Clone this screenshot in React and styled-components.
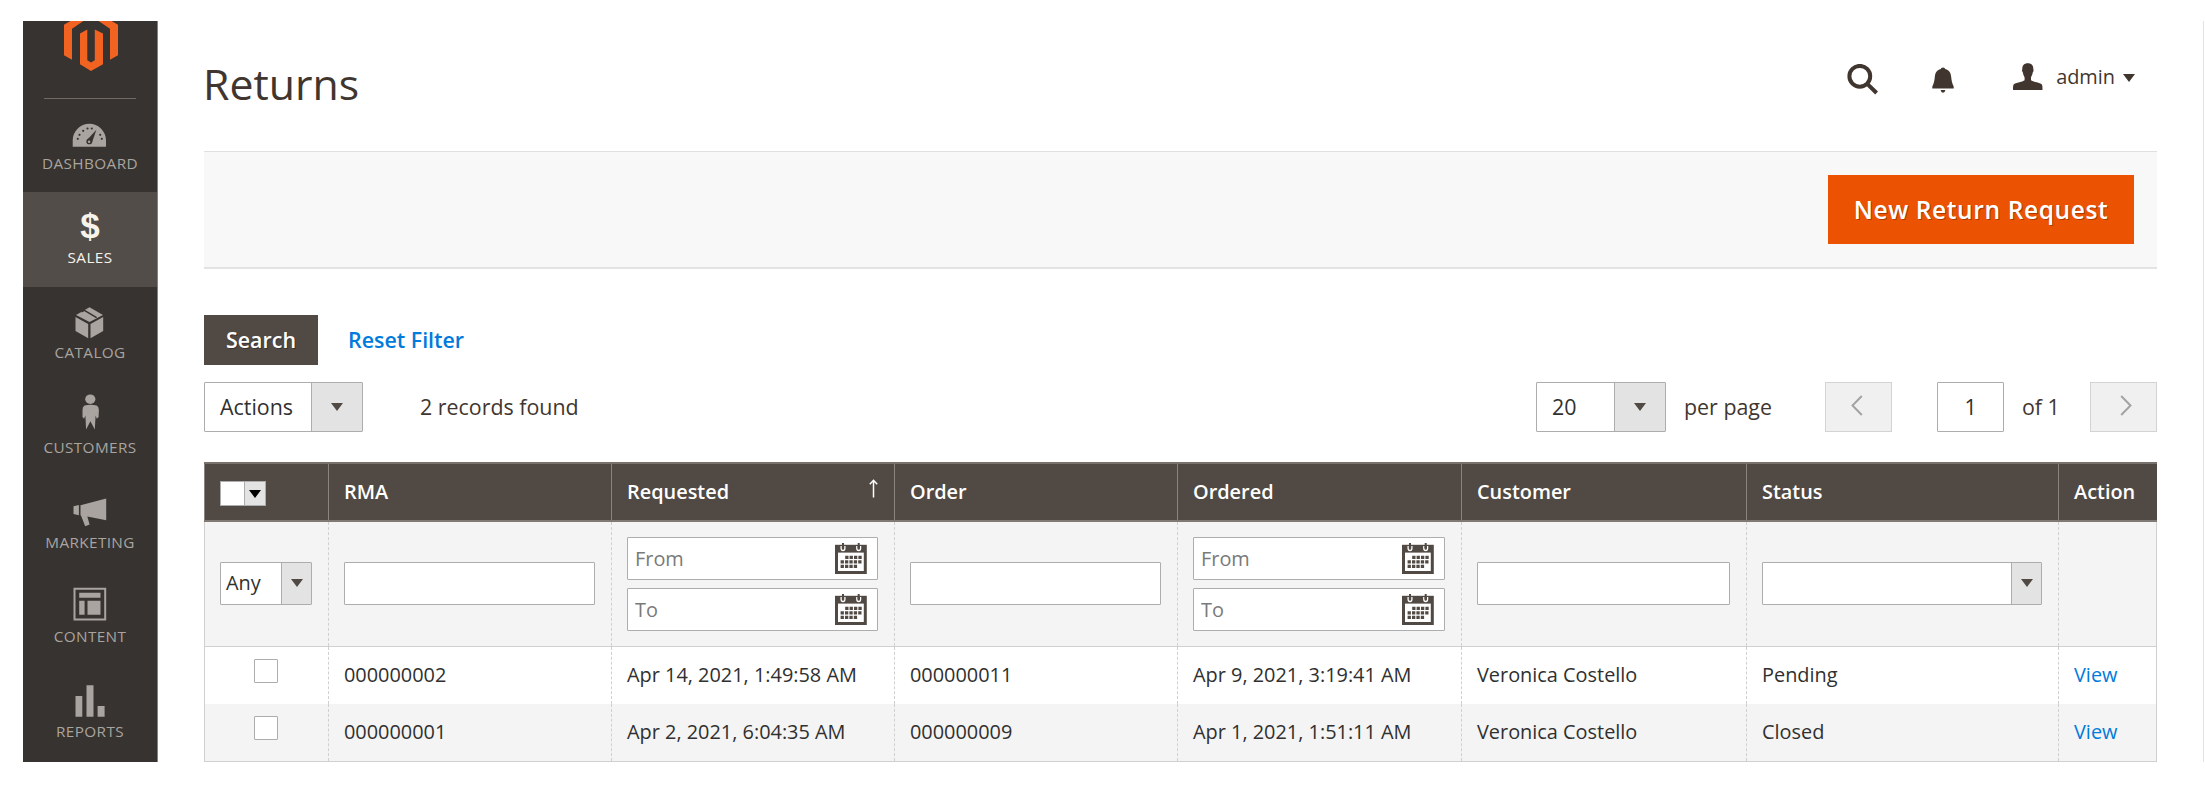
import styled, { createGlobalStyle, css } from "styled-components";

const menuItems = [
  { label: "Dashboard", icon: "dashboard" },
  { label: "Sales", icon: "sales", active: true },
  { label: "Catalog", icon: "catalog" },
  { label: "Customers", icon: "customers" },
  { label: "Marketing", icon: "marketing" },
  { label: "Content", icon: "content" },
  { label: "Reports", icon: "reports" },
];

const rows = [
  {
    rma: "000000002",
    requested: "Apr 14, 2021, 1:49:58 AM",
    order: "000000011",
    ordered: "Apr 9, 2021, 3:19:41 AM",
    customer: "Veronica Costello",
    status: "Pending",
  },
  {
    rma: "000000001",
    requested: "Apr 2, 2021, 6:04:35 AM",
    order: "000000009",
    ordered: "Apr 1, 2021, 1:51:11 AM",
    customer: "Veronica Costello",
    status: "Closed",
  },
];

const menuIcons = {
  dashboard: (
    <>
      <path d="M.7 36.8V30.3a16.65 16.5 0 0 1 33.3 0v6.5z" />
      <g fill="#373330">
        <circle cx="5.8" cy="28.8" r="1.1" />
        <circle cx="7.5" cy="24.8" r="1.1" />
        <circle cx="11.2" cy="20.8" r="1.1" />
        <circle cx="15.5" cy="18.5" r="1.1" />
        <circle cx="19.8" cy="18.5" r="1.1" />
        <circle cx="28.2" cy="24.8" r="1.1" />
        <circle cx="29.8" cy="28.8" r="1.1" />
        <path d="M24.4 19.8 20 32.6l-5-2.7z" />
        <circle cx="17.3" cy="31.4" r="2.9" />
      </g>
      <circle cx="17.1" cy="31.7" r="1.2" />
    </>
  ),
  catalog: (
    <>
      <path d="M17.5 7.2 31 14.9 17.5 22 4 14.9z" />
      <path d="M3.5 16.9 16.2 23.9V38.2L3.5 30.9z" />
      <path d="M18.5 23.9 31.2 16.9V30.9L18.5 38.2z" />
      <path
        d="M11.2 9.600 24.600 17.600M9.400 11.800 12.400 10.200"
        stroke="#373330"
        strokeWidth="1.6"
      />
    </>
  ),
  customers: (
    <>
      <ellipse cx="18.3" cy="5.2" rx="5.1" ry="4.8" />
      <path d="M12.5 11.4Q18.6 10 24.7 11.4 26.9 12.4 26.9 16L26.6 23 24.8 24.8 23.6 21.5 22.8 35.6 18.4 27.2 14.1 35.6 13.4 21.5 12.1 24.8 10.5 23V16Q10.4 12.4 12.5 11.4z" />
    </>
  ),
  marketing: (
    <>
      <path d="M1.5 17.3 6.9 16V26.2L1.5 25z" />
      <path d="M8.5 16.3 34.2 9.6V31.3L15.3 27.6 17.6 35.4 13.2 37.3 9 26.4H8.5z" />
    </>
  ),
  content: (
    <>
      <path d="M2.5 4.8H33.2V35.5H2.5z" fill="none" stroke="#a9a49f" strokeWidth="2" />
      <path d="M7.2 8.8H28.5V13.8H7.2zM7.2 16.8H12.6V30.8H7.2zM15.5 16.8H28.5V30.8H15.5z" />
    </>
  ),
  reports: (
    <path d="M3.5 17H10.3V37.8H3.5zM14.5 6.3H21.5V37.8H14.5zM25.6 27H32.6V37.8H25.6z" />
  ),
};

const Logo = () => (
  <LogoSvg viewBox="64 21 54 50">
    <path d="M64 24.7 70.4 21H83.4L72 28.8V59.8L64 55.3z" />
    <path d="M118 24.7 111.6 21H98.6L110 28.8V59.8L118 55.3z" />
    <path d="M80 33.4 87.3 29.4V60.2L91 62.4 94.8 60.2V29.4L103 33.4V64.3L91 71 80 64.3z" />
  </LogoSvg>
);

const Calendar = () => (
  <svg width="32" height="31" viewBox="0 0 32 31">
    <path fill="#514943" d="M0 1.8H31.8V31H0z" />
    <path fill="#fff" d="M3 9.6H28.8V28H3z" />
    {[8, 23.7].map((x) => (
      <g key={x} fill="none">
        <path
          d={`M${x - 1.9} 3V5.6a1.9 1.9 0 0 0 3.8 0V3`}
          stroke="#fff"
          strokeWidth="1.3"
        />
        <path d={`M${x} 0V5`} stroke="#514943" strokeWidth="2" />
      </g>
    ))}
    <path
      d="M10.2 14.4H27M5.6 18.9H27M5.6 23.4H22.6"
      stroke="#514943"
      strokeWidth="3.2"
      strokeDasharray="3.3 1.1"
    />
  </svg>
);

const Dropdown = ({ label, ...size }) => (
  <SelectBox {...size}>
    <span>{label}</span>
    <SelectArrow $width={size.$arrow}>
      <Caret />
    </SelectArrow>
  </SelectBox>
);

const DateRange = () => (
  <DateFields>
    {["From", "To"].map((name) => (
      <DateField key={name}>
        <DateInput placeholder={name} />
        <Calendar />
      </DateField>
    ))}
  </DateFields>
);

const App = () => {
  return (
    <Page>
      <GlobalStyle />
      <Sidebar>
        <Logo />
        <Divider />
        {menuItems.map(({ label, icon, active }) => (
          <MenuItem key={label} $active={active}>
            {icon === "sales" ? (
              <Dollar>$</Dollar>
            ) : (
              <MenuIcon viewBox="0 0 36 38">{menuIcons[icon]}</MenuIcon>
            )}
            <MenuLabel>{label}</MenuLabel>
          </MenuItem>
        ))}
      </Sidebar>

      <Main>
        <Header>
          <Title>Returns</Title>
          <HeaderTools>
            <SearchIcon viewBox="0 0 32 32">
              <circle cx="12.8" cy="12.3" r="10.4" />
              <path d="M20 19.6 29.6 29" />
            </SearchIcon>
            <BellIcon viewBox="0 0 22 26">
              <path d="M11 .4c1.3 0 2 .8 2.2 1.7 4.4 1 5.6 4.3 6 8 .4 4 .9 6.5 2.5 9.3v2H.3v-2c1.600-2.800 2.100-5.300 2.500-9.300.4-3.700 1.600-7 6-8C9 1.200 9.700.4 11 .4z" />
              <path d="M8.6 23h4.8Q13 25.700 11 25.700T8.600 23z" />
            </BellIcon>
            <User>
              <UserIcon viewBox="0 0 30 27">
                <path d="M14.8.2C18.600.2 20.500 2.500 20.300 6.300 20.900 7 20.500 8.800 19.700 9.600 19.400 12 18.300 13.600 18 14.400V17.200C21 19 25.500 19.400 28 20.800 29.500 21.600 29.500 23.500 29.500 27H0C0 23.500 0 21.600 1.500 20.800 4 19.400 8.600 19 11.600 17.200V14.400C11.200 13.600 10.200 12 9.900 9.600 9.100 8.800 8.700 7 9.300 6.300 9.100 2.500 11 .2 14.800.2z" />
              </UserIcon>
              <span>admin</span>
              <Caret $color="#41362f" />
            </User>
          </HeaderTools>
        </Header>

        <ActionBar>
          <PrimaryButton>New Return Request</PrimaryButton>
        </ActionBar>

        <FilterButtons>
          <SearchButton>Search</SearchButton>
          <ResetButton>Reset Filter</ResetButton>
        </FilterButtons>

        <Controls>
          <Dropdown label="Actions" $width={159} $height={50} $arrow={51} />
          <Records>2 records found</Records>
          <Dropdown label="20" $width={130} $height={50} $arrow={51} />
          <PerPage>per page</PerPage>
          <PagerButton>
            <svg width="16" height="21" viewBox="0 0 16 21">
              <path d="M10.8 1 1.500 10.500 10.800 20" />
            </svg>
          </PagerButton>
          <PageInput defaultValue="1" />
          <PageCount>of 1</PageCount>
          <PagerButton>
            <svg width="16" height="21" viewBox="0 0 16 21">
              <path d="M5.200 1 14.500 10.500 5.200 20" />
            </svg>
          </PagerButton>
        </Controls>

        <Grid>
          <HeadRow>
            <Cell>
              <MultiCheck>
                <span />
                <i>
                  <Caret $color="#000" />
                </i>
              </MultiCheck>
            </Cell>
            <Cell>RMA</Cell>
            <Cell>
              Requested
              <SortArrow viewBox="0 0 9 19">
                <path d="M4.500 18.500V1.500M.800 5.200 4.500 1.300 8.200 5.200" />
              </SortArrow>
            </Cell>
            <Cell>Order</Cell>
            <Cell>Ordered</Cell>
            <Cell>Customer</Cell>
            <Cell>Status</Cell>
            <Cell>Action</Cell>
          </HeadRow>
          <FilterRow>
            <Cell>
              <Dropdown label="Any" $width={92} $height={43} $arrow={30} $small />
            </Cell>
            <Cell>
              <TextInput />
            </Cell>
            <Cell>
              <DateRange />
            </Cell>
            <Cell>
              <TextInput />
            </Cell>
            <Cell>
              <DateRange />
            </Cell>
            <Cell>
              <TextInput />
            </Cell>
            <Cell>
              <Dropdown label="" $width={280} $height={43} $arrow={30} $small />
            </Cell>
            <Cell />
          </FilterRow>
          {rows.map((row) => (
            <DataRow key={row.rma}>
              <Cell>
                <Checkbox />
              </Cell>
              <Cell>{row.rma}</Cell>
              <Cell>{row.requested}</Cell>
              <Cell>{row.order}</Cell>
              <Cell>{row.ordered}</Cell>
              <Cell>{row.customer}</Cell>
              <Cell>{row.status}</Cell>
              <Cell>
                <ViewLink>View</ViewLink>
              </Cell>
            </DataRow>
          ))}
        </Grid>
      </Main>
      <Edge />
    </Page>
  );
};

const GlobalStyle = createGlobalStyle`
  * {
    box-sizing: border-box;
  }

  body {
    margin: 0;
    background-color: #fff;
    color: #303030;
    font-family: "Open Sans", "Noto Sans", sans-serif;
    font-size: 19.9px;
  }

  button,
  input {
    font-family: inherit;
    margin: 0;
  }
`;

const Page = styled.div`
  display: grid;
  grid-template-columns: 135px 1953px 1px;
  column-gap: 46px;
  width: 2205px;
  height: 795px;
  padding: 21px 0 33px 23px;
  overflow: hidden;
`;

const Sidebar = styled.nav`
  display: flex;
  flex-direction: column;
  align-items: center;
  background-color: #373330;
  border-right: 1px solid #85817e;
`;

const LogoSvg = styled.svg`
  width: 54px;
  height: 50px;
  flex: none;
  margin-left: 1px;
  fill: #f26322;
`;

const Divider = styled.div`
  width: 92px;
  height: 1px;
  flex: none;
  margin-top: 27px;
  margin-bottom: -2px;
  background-color: #736963;
`;

const MenuItem = styled.div`
  display: flex;
  flex-direction: column;
  align-items: center;
  width: 100%;
  height: 94.8px;
  flex: none;
  padding-top: 13px;
  color: ${(props) => (props.$active ? "#f7f3eb" : "#a9a49f")};
  background-color: ${(props) => (props.$active ? "#524d49" : "transparent")};
`;

const MenuIcon = styled.svg`
  width: 36px;
  height: 38px;
  overflow: visible;
  fill: currentColor;
`;

const Dollar = styled.span`
  height: 38px;
  font-family: "Liberation Sans", sans-serif;
  font-size: 35px;
  font-weight: bold;
  line-height: 42px;
`;

const MenuLabel = styled.span`
  margin-top: 4.5px;
  font-size: 15.3px;
  line-height: 20px;
  letter-spacing: 0.025em;
  text-transform: uppercase;
`;

const Main = styled.main`
  min-width: 0;
`;

const Header = styled.header`
  display: flex;
  justify-content: space-between;
  height: 130px;
`;

const Title = styled.h1`
  margin: 0 0 0 -1px;
  padding-top: 34px;
  font-size: 42.8px;
  font-weight: 400;
  line-height: 58px;
  color: #41362f;
`;

const HeaderTools = styled.div`
  display: flex;
  align-items: flex-start;
  padding: 42px 22px 0 0;
  color: #41362f;
`;

const SearchIcon = styled.svg`
  width: 32px;
  height: 32px;
  margin-top: 1px;
  fill: none;
  stroke: currentColor;
  stroke-width: 4;
`;

const BellIcon = styled.svg`
  width: 22px;
  height: 26px;
  margin: 4px 0 0 53px;
  fill: currentColor;
`;

const User = styled.div`
  display: flex;
  align-items: center;
  margin-left: 59px;
  line-height: 27px;

  span {
    margin: 0 11px 0 13px;
  }
`;

const UserIcon = styled.svg`
  width: 30px;
  height: 27px;
  fill: currentColor;
`;

const Caret = styled.span`
  && {
    width: 0;
    height: 0;
    margin: 0;
    flex: none;
    border: 6px solid transparent;
    border-top: 8px solid ${(props) => props.$color || "#514943"};
    border-bottom: 0;
  }

  ${User} && {
    margin: 3px 0 0 -3px;
  }
`;

const ActionBar = styled.div`
  display: flex;
  justify-content: flex-end;
  align-items: center;
  height: 118px;
  padding-right: 23px;
  background-color: #f8f8f8;
  border-top: 1px solid #e0e0e0;
  border-bottom: 2px solid #e3e3e3;
`;

const PrimaryButton = styled.button`
  width: 306px;
  height: 69px;
  padding: 0;
  border: none;
  background-color: #eb5202;
  color: #fff;
  font-size: 24.5px;
  font-weight: 600;
  letter-spacing: 0.025em;
  text-shadow: 1px 1px 0 rgba(0, 0, 0, 0.3);
`;

const FilterButtons = styled.div`
  display: flex;
  margin-top: 46px;
`;

const SearchButton = styled.button`
  width: 114px;
  height: 50px;
  padding: 0 0 1px;
  border: none;
  background-color: #514943;
  color: #fff;
  font-size: 21.4px;
  font-weight: 600;
  text-shadow: 1px 1px 0 rgba(0, 0, 0, 0.3);
`;

const ResetButton = styled.button`
  padding: 0 0 1px;
  margin-left: 30px;
  border: none;
  background: none;
  color: #007bdb;
  font-size: 21.4px;
  font-weight: 600;
`;

const Controls = styled.div`
  display: flex;
  align-items: center;
  height: 50px;
  margin-top: 17px;
  color: #41362f;
  font-size: 21.4px;
`;

const SelectBox = styled.div`
  display: flex;
  justify-content: space-between;
  align-items: center;
  flex: none;
  width: ${(props) => props.$width}px;
  height: ${(props) => props.$height}px;
  padding-left: ${(props) => (props.$small ? 5 : 15)}px;
  border: 1px solid #adadad;
  border-radius: 1px;
  background-color: #fff;
  color: #303030;

  > span:first-child {
    padding-bottom: 2px;
  }
`;

const SelectArrow = styled.span`
  display: flex;
  align-items: center;
  justify-content: center;
  width: ${(props) => props.$width}px;
  height: 100%;
  border-left: 1px solid #adadad;
  background-color: #e3e3e3;
`;

const Records = styled.span`
  margin-left: 57px;
  margin-right: auto;
  padding-bottom: 2px;
`;

const PerPage = styled.span`
  width: 89px;
  margin: 0 52px 0 18px;
  padding-bottom: 2px;
  white-space: nowrap;
`;

const PagerButton = styled.button`
  display: flex;
  align-items: center;
  justify-content: center;
  width: 67px;
  height: 50px;
  padding: 0 0 3px;
  border: 1px solid #d3d3d3;
  background-color: #f0f0f0;

  path {
    fill: none;
    stroke: #a3a3a3;
    stroke-width: 2;
  }
`;

const PageInput = styled.input`
  width: 67px;
  height: 50px;
  margin-left: 45px;
  padding: 0 0 2px;
  border: 1px solid #adadad;
  border-radius: 1px;
  color: #303030;
  font-size: 21.4px;
  text-align: center;
`;

const PageCount = styled.span`
  width: 68px;
  margin-left: 18px;
  padding-bottom: 2px;
`;

const Grid = styled.div`
  margin-top: 30px;
`;

const Cell = styled.div`
  display: flex;
  align-items: center;
  min-width: 0;
  padding: 0 16px 2px 15px;
  border-left: 1px dashed #d0d0d0;
  white-space: nowrap;

  &:first-child {
    border-left: 1px solid #d0d0d0;
  }

  &:last-child {
    border-right: 1px solid #d0d0d0;
  }
`;

const rowBase = css`
  display: grid;
  grid-template-columns: 124px 283px 283px 283px 284px 285px 312px 99px;
`;

const HeadRow = styled.div`
  ${rowBase}
  height: 60px;
  background-color: #514943;
  border-top: 2px solid #79716c;
  border-bottom: 2px solid #817974;
  color: #fff;
  font-weight: 600;

  ${Cell}, ${Cell}:first-child, ${Cell}:last-child {
    border-color: #8a837f;
    border-style: solid;
  }

  ${Cell} {
    border-width: 0 0 0 1px;
  }
`;

const FilterRow = styled.div`
  ${rowBase}
  height: 125px;
  background-color: #f4f4f4;
  border-bottom: 1px solid #d0d0d0;
`;

const DataRow = styled.div`
  ${rowBase}
  height: 57px;

  &:last-child {
    height: 58px;
    background-color: #f4f4f4;
    border-bottom: 1px solid #d0d0d0;
  }
`;

const MultiCheck = styled.div`
  display: flex;
  width: 46px;
  height: 25px;
  margin-top: 5px;
  border: 1px solid #adadad;
  background-color: #fff;

  span {
    flex: 1;
  }

  i {
    display: flex;
    align-items: center;
    justify-content: center;
    width: 21px;
    border-left: 1px solid #adadad;
    background-color: #e3e3e3;
  }
`;

const SortArrow = styled.svg`
  width: 9px;
  height: 19px;
  margin: 0 0 6px auto;
  fill: none;
  stroke: #fff;
  stroke-width: 1.5;
`;

const TextInput = styled.input`
  width: 100%;
  height: 43px;
  padding: 0 8px;
  border: 1px solid #adadad;
  border-radius: 1px;
  background-color: #fff;
`;

const DateFields = styled.div`
  display: flex;
  flex-direction: column;
  gap: 8px;
  width: 100%;
  margin-top: 2px;
`;

const DateField = styled.div`
  display: flex;
  align-items: center;
  height: 43px;
  padding: 0 10px 0 7px;
  border: 1px solid #adadad;
  border-radius: 1px;
  background-color: #fff;

  svg {
    flex: none;
    margin-bottom: 1px;
  }
`;

const DateInput = styled.input`
  flex: 1;
  min-width: 0;
  padding: 0;
  border: none;
  background: none;
  font-size: 19.9px;

  &::placeholder {
    color: #7a7a7a;
  }
`;

const Checkbox = styled.span`
  width: 24px;
  height: 24px;
  margin: 0 auto 7px;
  border: 1px solid #adadad;
  border-radius: 1px;
  background-color: #fff;
`;

const ViewLink = styled.a`
  color: #007bdb;
`;

const Edge = styled.div`
  background-color: #e3e3e3;
`;

export default App;
